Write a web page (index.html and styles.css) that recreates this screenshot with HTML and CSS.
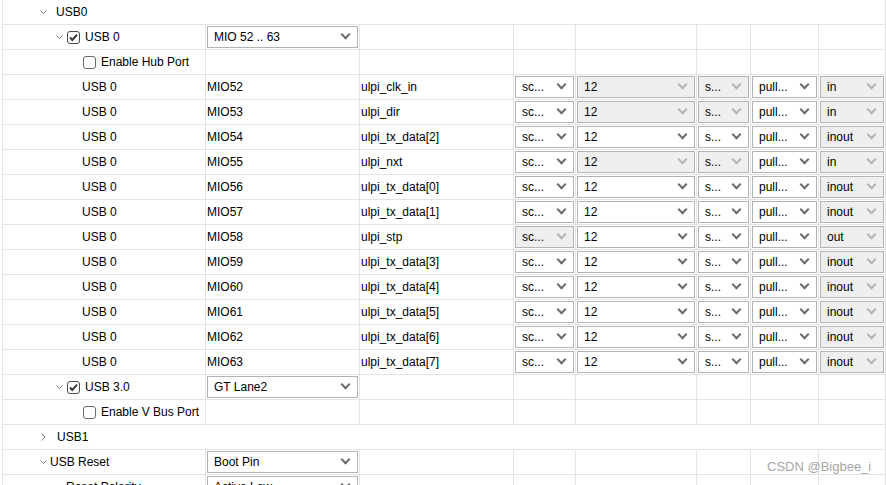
FILE: index.html
```html
<!DOCTYPE html>
<html lang="en">
<head>
  <meta charset="UTF-8" />
  <title>USB configuration</title>
  <link rel="stylesheet" href="styles.css">
</head>
<body>
  <div class="tree">
    <div class="row group">
      <div class="cell lvl1"><svg class="twist" width="7" height="5"><polyline points="0.5,0.5 3.5,3.5 6.5,0.5"/></svg><span>USB0</span></div>
    </div>

    <div class="row">
      <div class="cell lvl2"><svg class="twist" width="7" height="5"><polyline points="0.5,0.5 3.5,3.5 6.5,0.5"/></svg><svg class="chk" width="13" height="13"><rect x="0.5" y="0.5" width="12" height="12" rx="2.5"/><polyline class="tick" points="3,6.5 5.3,9 10,3.6"/></svg><span>USB 0</span></div>
      <div class="cell"><div class="sel">MIO 52 .. 63</div></div>
      <div class="cell"></div><div class="cell"></div><div class="cell"></div><div class="cell"></div><div class="cell"></div><div class="cell"></div>
    </div>

    <div class="row">
      <div class="cell lvl3"><svg class="chk off" width="13" height="13"><rect x="0.5" y="0.5" width="12" height="12" rx="2.5"/></svg><span>Enable Hub Port</span></div>
      <div class="cell"></div><div class="cell"></div><div class="cell"></div><div class="cell"></div><div class="cell"></div><div class="cell"></div><div class="cell"></div>
    </div>

    <div class="row">
      <div class="cell pin">USB 0</div><div class="cell txt">MIO52</div><div class="cell txt">ulpi_clk_in</div>
      <div class="cell"><div class="sel">sc...</div></div><div class="cell"><div class="sel dis">12</div></div><div class="cell"><div class="sel dis">s...</div></div><div class="cell"><div class="sel">pull...</div></div><div class="cell"><div class="sel dis">in</div></div>
    </div>
    <div class="row">
      <div class="cell pin">USB 0</div><div class="cell txt">MIO53</div><div class="cell txt">ulpi_dir</div>
      <div class="cell"><div class="sel">sc...</div></div><div class="cell"><div class="sel dis">12</div></div><div class="cell"><div class="sel dis">s...</div></div><div class="cell"><div class="sel">pull...</div></div><div class="cell"><div class="sel dis">in</div></div>
    </div>
    <div class="row">
      <div class="cell pin">USB 0</div><div class="cell txt">MIO54</div><div class="cell txt">ulpi_tx_data[2]</div>
      <div class="cell"><div class="sel">sc...</div></div><div class="cell"><div class="sel">12</div></div><div class="cell"><div class="sel">s...</div></div><div class="cell"><div class="sel">pull...</div></div><div class="cell"><div class="sel dis">inout</div></div>
    </div>
    <div class="row">
      <div class="cell pin">USB 0</div><div class="cell txt">MIO55</div><div class="cell txt">ulpi_nxt</div>
      <div class="cell"><div class="sel">sc...</div></div><div class="cell"><div class="sel dis">12</div></div><div class="cell"><div class="sel dis">s...</div></div><div class="cell"><div class="sel">pull...</div></div><div class="cell"><div class="sel dis">in</div></div>
    </div>
    <div class="row">
      <div class="cell pin">USB 0</div><div class="cell txt">MIO56</div><div class="cell txt">ulpi_tx_data[0]</div>
      <div class="cell"><div class="sel">sc...</div></div><div class="cell"><div class="sel">12</div></div><div class="cell"><div class="sel">s...</div></div><div class="cell"><div class="sel">pull...</div></div><div class="cell"><div class="sel dis">inout</div></div>
    </div>
    <div class="row">
      <div class="cell pin">USB 0</div><div class="cell txt">MIO57</div><div class="cell txt">ulpi_tx_data[1]</div>
      <div class="cell"><div class="sel">sc...</div></div><div class="cell"><div class="sel">12</div></div><div class="cell"><div class="sel">s...</div></div><div class="cell"><div class="sel">pull...</div></div><div class="cell"><div class="sel dis">inout</div></div>
    </div>
    <div class="row">
      <div class="cell pin">USB 0</div><div class="cell txt">MIO58</div><div class="cell txt">ulpi_stp</div>
      <div class="cell"><div class="sel dis">sc...</div></div><div class="cell"><div class="sel">12</div></div><div class="cell"><div class="sel">s...</div></div><div class="cell"><div class="sel">pull...</div></div><div class="cell"><div class="sel dis">out</div></div>
    </div>
    <div class="row">
      <div class="cell pin">USB 0</div><div class="cell txt">MIO59</div><div class="cell txt">ulpi_tx_data[3]</div>
      <div class="cell"><div class="sel">sc...</div></div><div class="cell"><div class="sel">12</div></div><div class="cell"><div class="sel">s...</div></div><div class="cell"><div class="sel">pull...</div></div><div class="cell"><div class="sel dis">inout</div></div>
    </div>
    <div class="row">
      <div class="cell pin">USB 0</div><div class="cell txt">MIO60</div><div class="cell txt">ulpi_tx_data[4]</div>
      <div class="cell"><div class="sel">sc...</div></div><div class="cell"><div class="sel">12</div></div><div class="cell"><div class="sel">s...</div></div><div class="cell"><div class="sel">pull...</div></div><div class="cell"><div class="sel dis">inout</div></div>
    </div>
    <div class="row">
      <div class="cell pin">USB 0</div><div class="cell txt">MIO61</div><div class="cell txt">ulpi_tx_data[5]</div>
      <div class="cell"><div class="sel">sc...</div></div><div class="cell"><div class="sel">12</div></div><div class="cell"><div class="sel">s...</div></div><div class="cell"><div class="sel">pull...</div></div><div class="cell"><div class="sel dis">inout</div></div>
    </div>
    <div class="row">
      <div class="cell pin">USB 0</div><div class="cell txt">MIO62</div><div class="cell txt">ulpi_tx_data[6]</div>
      <div class="cell"><div class="sel">sc...</div></div><div class="cell"><div class="sel">12</div></div><div class="cell"><div class="sel">s...</div></div><div class="cell"><div class="sel">pull...</div></div><div class="cell"><div class="sel dis">inout</div></div>
    </div>
    <div class="row">
      <div class="cell pin">USB 0</div><div class="cell txt">MIO63</div><div class="cell txt">ulpi_tx_data[7]</div>
      <div class="cell"><div class="sel">sc...</div></div><div class="cell"><div class="sel">12</div></div><div class="cell"><div class="sel">s...</div></div><div class="cell"><div class="sel">pull...</div></div><div class="cell"><div class="sel dis">inout</div></div>
    </div>

    <div class="row">
      <div class="cell lvl2"><svg class="twist" width="7" height="5"><polyline points="0.5,0.5 3.5,3.5 6.5,0.5"/></svg><svg class="chk" width="13" height="13"><rect x="0.5" y="0.5" width="12" height="12" rx="2.5"/><polyline class="tick" points="3,6.5 5.3,9 10,3.6"/></svg><span>USB 3.0</span></div>
      <div class="cell"><div class="sel">GT Lane2</div></div>
      <div class="cell"></div><div class="cell"></div><div class="cell"></div><div class="cell"></div><div class="cell"></div><div class="cell"></div>
    </div>

    <div class="row">
      <div class="cell lvl3"><svg class="chk off" width="13" height="13"><rect x="0.5" y="0.5" width="12" height="12" rx="2.5"/></svg><span>Enable V Bus Port</span></div>
      <div class="cell"></div><div class="cell"></div><div class="cell"></div><div class="cell"></div><div class="cell"></div><div class="cell"></div><div class="cell"></div>
    </div>

    <div class="row group">
      <div class="cell lvl1 closed"><svg class="twist" width="5" height="8"><polyline points="0.5,0.5 4,4 0.5,7.5"/></svg><span>USB1</span></div>
    </div>

    <div class="row">
      <div class="cell reset"><svg class="twist" width="7" height="5"><polyline points="0.5,0.5 3.5,3.5 6.5,0.5"/></svg><span>USB Reset</span></div>
      <div class="cell"><div class="sel">Boot Pin</div></div>
      <div class="cell"></div><div class="cell"></div><div class="cell"></div><div class="cell"></div><div class="cell"></div><div class="cell"></div>
    </div>

    <div class="row">
      <div class="cell polarity">Reset Polarity</div>
      <div class="cell"><div class="sel">Active Low</div></div>
      <div class="cell"></div><div class="cell"></div><div class="cell"></div><div class="cell"></div><div class="cell"></div><div class="cell"></div>
    </div>
  </div>

  <div class="mark">CSDN @Bigbee_i</div>
</body>
</html>
```

FILE: styles.css
```css
html, body {
  margin: 0;
  overflow: hidden;
  background: #fff;
}
body {
  font: 12px "Liberation Sans", Arial, sans-serif;
  color: #000;
  position: relative;
  height: 485px;
}
.tree {
  margin-left: 2px;
  width: 884px;
  box-sizing: border-box;
  border-left: 1px solid #e3e3e3;
  border-right: 1px solid #e3e3e3;
}
.row {
  display: grid;
  grid-template-columns: 203px 154px 154px 62px 121px 54px 68px 66px;
  height: 25px;
  box-sizing: border-box;
  border-bottom: 1px solid #e3e3e3;
}
.cell {
  display: flex;
  align-items: center;
  min-width: 0;
  border-right: 1px solid #e3e3e3;
  white-space: nowrap;
}
.cell:last-child {
  border-right: none;
}
.group .cell {
  grid-column: 1 / -1;
  border-right: none;
}

/* tree indents */
.lvl1 { padding-left: 37px; }
.lvl1 .twist { margin-right: 9px; }
.lvl1.closed { padding-left: 38px; }
.lvl1.closed .twist { margin-right: 11px; }
.lvl2 { padding-left: 53px; }
.lvl2 .twist { margin-right: 4px; }
.lvl2 .chk { margin-right: 5px; }
.lvl3 { padding-left: 80px; }
.lvl3 .chk { margin-right: 5px; }
.pin { padding-left: 79px; }
.txt { padding-left: 1px; }
.reset { padding-left: 37px; }
.reset .twist { margin-right: 3px; }
.polarity { padding-left: 63px; }

.twist {
  flex: none;
  fill: none;
  stroke: #7c7c7c;
  stroke-width: 1;
}
.chk {
  flex: none;
}
.chk rect {
  fill: #fff;
  stroke: #4a4a4a;
}
.chk.off rect {
  stroke: #6a6a6a;
}
.chk .tick {
  fill: none;
  stroke: #3a3a3a;
  stroke-width: 2;
}

/* combo boxes */
.sel {
  flex: 1;
  align-self: stretch;
  min-width: 0;
  margin: 1px;
  padding-left: 6px;
  border: 1px solid #b3b3b3;
  background: #fff;
  display: flex;
  align-items: center;
  overflow: hidden;
}
.sel::after {
  content: "";
  flex: none;
  width: 5px;
  height: 5px;
  margin-left: auto;
  margin-right: 8px;
  margin-top: -5px;
  border-right: 2px solid #6b6b6b;
  border-bottom: 2px solid #6b6b6b;
  transform: rotate(45deg);
}
.sel.dis {
  background: #efefef;
}
.sel.dis::after {
  border-color: #b4b4b4;
}

.mark {
  position: absolute;
  left: 767px;
  top: 459px;
  font-size: 13px;
  color: #a6a6a6;
}
```
